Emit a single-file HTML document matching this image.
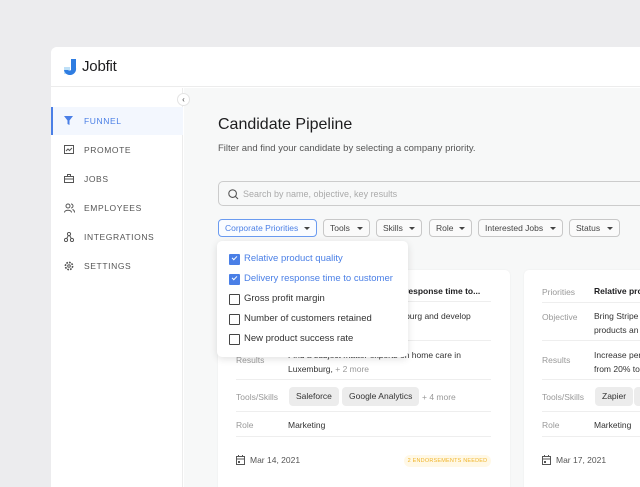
<!DOCTYPE html>
<html><head><style>
*{box-sizing:border-box;margin:0;padding:0}
body{width:640px;height:480px;overflow:hidden;background:#ececee;font-family:"Liberation Sans",sans-serif;position:relative}
div{white-space:nowrap}
.win{position:absolute;left:51px;top:47px;width:600px;height:440px;background:#fff;border-radius:6px 0 0 0;overflow:hidden}
.hdr{position:absolute;left:0;top:0;width:600px;height:40px;border-bottom:1px solid #ececec;background:#fff}
.logo{position:absolute;left:31px;top:11px;font-size:15px;color:#1d1d1f;letter-spacing:-0.2px}
.side{position:absolute;left:0;top:41px;width:132px;height:400px;background:#fff;border-right:1px solid #ececec}
.nav{position:absolute;left:0;width:132px;height:28px;font-size:8.5px;letter-spacing:0.6px;color:#555;line-height:28px;padding-left:33px}
.nav.act{background:#f3f7fe;color:#4a7fe6;border-left:2px solid #4a7fe6;padding-left:31px}
.nav svg{position:absolute;left:13px;top:9px}
.nav.act svg{left:11px}
.main{position:absolute;left:133px;top:41px;width:470px;height:400px;background:#f7f8f8}
.ab{position:absolute;font-size:8.5px}
.chip{position:absolute;top:131px;height:18px;border:1px solid #c8c8c8;border-radius:4px;font-size:8.5px;color:#444;line-height:16px;padding-left:6px;background:#fafafa}
.chip:after{content:"";position:absolute;right:6px;top:7px;border:3px solid transparent;border-top:3px solid #444}
.card{position:absolute;top:182px;background:#fff;border-radius:5px;height:230px;box-shadow:0 0 2px rgba(0,0,0,.05)}
.lbl{position:absolute;font-size:8.5px;color:#999}
.val{position:absolute;font-size:8.5px;color:#333;line-height:14px}
.hr{position:absolute;height:1px;background:#eee}
.tag{position:absolute;height:19px;background:#ececec;border-radius:4px;font-size:8.5px;color:#333;line-height:19px;padding:0 7px}
.dd{position:absolute;left:217px;top:241px;width:191px;height:116px;background:#fff;border-radius:5px;box-shadow:0 2px 8px rgba(0,0,0,.12)}
.it{position:absolute;left:12px;font-size:9.5px;color:#333;height:12px;line-height:12px;padding-left:15px}
.it:before{content:"";position:absolute;left:0;top:1px;width:9px;height:9px;border:1.3px solid #444;border-radius:1px}
.it.on{color:#4a7fe6}
.it.on:before{background:#4a7fe6;border-color:#4a7fe6}
.it.on:after{content:"";position:absolute;left:2.5px;top:3px;width:4px;height:2px;border-left:1.3px solid #fff;border-bottom:1.3px solid #fff;transform:rotate(-45deg)}
</style></head><body>
<div class="win">
<div class="hdr">
<svg style="position:absolute;left:13px;top:11px" width="14" height="17" viewBox="0 0 14 17"><rect x="0" y="9" width="6" height="7" fill="#bfe0f7"/><path d="M7 1h5v9a6 6 0 0 1-12 2h4a2 2 0 0 0 3 0z" fill="#2f7de1"/></svg>
<div class="logo">Jobfit</div>
</div>
<div class="side">
<div class="nav act" style="top:19px"><svg width="9" height="9" viewBox="0 0 9 9"><path d="M0 0h9L5.5 4.5V9L3.5 8V4.5z" fill="#4a7fe6"/></svg>FUNNEL</div>
<div class="nav" style="top:48px"><svg width="10" height="9" viewBox="0 0 10 9"><rect x=".5" y=".5" width="9" height="8" fill="none" stroke="#555"/><path d="M2 6l2-2 1.5 1.5L8 3" fill="none" stroke="#555"/></svg>PROMOTE</div>
<div class="nav" style="top:77px"><svg width="10" height="9" viewBox="0 0 10 9"><rect x=".5" y="2.5" width="9" height="6" fill="none" stroke="#555"/><path d="M3.5 2.5V.5h3v2M.5 5h9" fill="none" stroke="#555"/></svg>JOBS</div>
<div class="nav" style="top:106px"><svg width="11" height="10" viewBox="0 0 11 10"><circle cx="4" cy="3" r="2" fill="none" stroke="#555"/><path d="M.5 9.5c0-3 7-3 7 0M7 1a2 2 0 0 1 0 4M8.5 6.5c1.5.5 2 1.5 2 3" fill="none" stroke="#555"/></svg>EMPLOYEES</div>
<div class="nav" style="top:135px"><svg width="10" height="10" viewBox="0 0 10 10"><circle cx="5" cy="2" r="1.6" fill="none" stroke="#555"/><circle cx="2" cy="8" r="1.6" fill="none" stroke="#555"/><circle cx="8" cy="8" r="1.6" fill="none" stroke="#555"/><path d="M4.3 3.5L2.8 6.5M5.7 3.5l1.5 3" stroke="#555"/></svg>INTEGRATIONS</div>
<div class="nav" style="top:164px"><svg width="10" height="10" viewBox="0 0 10 10"><circle cx="5" cy="5" r="3.6" fill="none" stroke="#555" stroke-width="1.6" stroke-dasharray="1.8 1"/><circle cx="5" cy="5" r="1.3" fill="none" stroke="#555"/></svg>SETTINGS</div>
</div>
<div class="main">
<div class="ab" style="left:34px;top:28px;font-size:16px;color:#1d1d1f">Candidate Pipeline</div>
<div class="ab" style="left:34px;top:55px;font-size:9.5px;color:#555">Filter and find your candidate by selecting a company priority.</div>
<div style="position:absolute;left:34px;top:93px;width:450px;height:25px;border:1px solid #ccc;border-radius:5px;background:#f7f8f8">
<svg style="position:absolute;left:9px;top:7px" width="11" height="11" viewBox="0 0 11 11"><circle cx="4.6" cy="4.6" r="3.8" fill="none" stroke="#555" stroke-width="1.1"/><path d="M7.4 7.4L10 10" stroke="#555" stroke-width="1.1"/></svg>
<div class="ab" style="left:24px;top:7px;font-size:9px;color:#aaa">Search by name, objective, key results</div></div>
<div class="chip" style="left:34px;width:99px;border-color:#6b9bf0;color:#4a7fe6;background:#fafcff">Corporate Priorities</div>
<div class="chip" style="left:139px;width:47px">Tools</div>
<div class="chip" style="left:192px;width:46px">Skills</div>
<div class="chip" style="left:245px;width:43px">Role</div>
<div class="chip" style="left:294px;width:85px">Interested Jobs</div>
<div class="chip" style="left:385px;width:51px">Status</div>
<div class="card" style="left:34px;width:292px"></div>
<div class="card" style="left:340px;width:140px"></div>
</div>
<div style="position:absolute;left:126px;top:46px;width:13px;height:13px;border-radius:50%;background:#fff;border:1px solid #e4e4e4;font-size:8px;line-height:11px;text-align:center;color:#444">‹</div>
</div>
<div class="val" style="left:398px;top:284px;font-weight:bold;color:#1d1d1f">y response time to...</div>
<div class="hr" style="left:236px;top:301px;width:255px"></div>
<div class="val" style="left:398px;top:309px">mburg and develop</div>
<div class="hr" style="left:236px;top:340px;width:255px"></div>
<div class="lbl" style="left:236px;top:355px">Results</div>
<div class="val" style="left:288px;top:348px">Find a subject matter experts on home care in<br>Luxemburg, <span style="color:#999">+ 2 more</span></div>
<div class="hr" style="left:236px;top:379px;width:255px"></div>
<div class="lbl" style="left:236px;top:392px">Tools/Skills</div>
<div class="tag" style="left:289px;top:387px">Saleforce</div>
<div class="tag" style="left:342px;top:387px">Google Analytics</div>
<div class="lbl" style="left:422px;top:392px">+ 4 more</div>
<div class="hr" style="left:236px;top:411px;width:255px"></div>
<div class="lbl" style="left:236px;top:420px">Role</div>
<div class="val" style="left:288px;top:418px">Marketing</div>
<div class="hr" style="left:236px;top:436px;width:255px"></div>
<svg style="position:absolute;left:236px;top:455px" width="9" height="10" viewBox="0 0 9 10"><rect x=".5" y="1.5" width="8" height="8" fill="none" stroke="#555"/><path d="M.5 4h8M2.5 0v2M6.5 0v2" stroke="#555"/><rect x="2" y="6" width="2" height="2" fill="#555"/></svg>
<div class="val" style="left:250px;top:453px;color:#555">Mar 14, 2021</div>
<div style="position:absolute;left:404px;top:455px;width:87px;height:12px;background:#fff8e6;border-radius:6px;font-size:5.5px;color:#f0b429;text-align:center;line-height:12px;letter-spacing:.2px">2 ENDORSEMENTS NEEDED</div>
<div class="lbl" style="left:542px;top:287px">Priorities</div>
<div class="val" style="left:594px;top:284px;font-weight:bold;color:#1d1d1f">Relative produ</div>
<div class="hr" style="left:542px;top:302px;width:98px"></div>
<div class="lbl" style="left:542px;top:312px">Objective</div>
<div class="val" style="left:594px;top:309px">Bring Stripe<br>products an</div>
<div class="hr" style="left:542px;top:340px;width:98px"></div>
<div class="lbl" style="left:542px;top:355px">Results</div>
<div class="val" style="left:594px;top:348px">Increase per<br>from 20% to</div>
<div class="hr" style="left:542px;top:379px;width:98px"></div>
<div class="lbl" style="left:542px;top:392px">Tools/Skills</div>
<div class="tag" style="left:595px;top:387px">Zapier</div>
<div class="tag" style="left:634px;top:387px;width:10px"></div>
<div class="hr" style="left:542px;top:411px;width:98px"></div>
<div class="lbl" style="left:542px;top:420px">Role</div>
<div class="val" style="left:594px;top:418px">Marketing</div>
<div class="hr" style="left:542px;top:436px;width:98px"></div>
<svg style="position:absolute;left:542px;top:455px" width="9" height="10" viewBox="0 0 9 10"><rect x=".5" y="1.5" width="8" height="8" fill="none" stroke="#555"/><path d="M.5 4h8M2.5 0v2M6.5 0v2" stroke="#555"/><rect x="2" y="6" width="2" height="2" fill="#555"/></svg>
<div class="val" style="left:556px;top:453px;color:#555">Mar 17, 2021</div>
<div class="dd">
<div class="it on" style="top:12px">Relative product quality</div>
<div class="it on" style="top:32px">Delivery response time to customer</div>
<div class="it" style="top:52px">Gross profit margin</div>
<div class="it" style="top:72px">Number of customers retained</div>
<div class="it" style="top:92px">New product success rate</div>
</div>
</body></html>
